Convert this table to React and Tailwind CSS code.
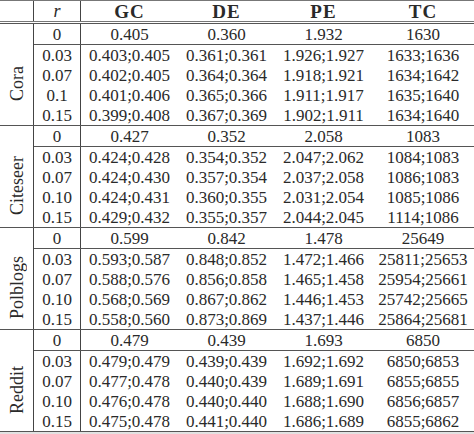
import React from "react";

const blocks = [
  {
    name: "Cora",
    base: ["0", "0.405", "0.360", "1.932", "1630"],
    rows: [
      ["0.03", "0.403;0.405", "0.361;0.361", "1.926;1.927", "1633;1636"],
      ["0.07", "0.402;0.405", "0.364;0.364", "1.918;1.921", "1634;1642"],
      ["0.1", "0.401;0.406", "0.365;0.366", "1.911;1.917", "1635;1640"],
      ["0.15", "0.399;0.408", "0.367;0.369", "1.902;1.911", "1634;1640"],
    ],
  },
  {
    name: "Citeseer",
    base: ["0", "0.427", "0.352", "2.058", "1083"],
    rows: [
      ["0.03", "0.424;0.428", "0.354;0.352", "2.047;2.062", "1084;1083"],
      ["0.07", "0.424;0.430", "0.357;0.354", "2.037;2.058", "1086;1083"],
      ["0.10", "0.424;0.431", "0.360;0.355", "2.031;2.054", "1085;1086"],
      ["0.15", "0.429;0.432", "0.355;0.357", "2.044;2.045", "1114;1086"],
    ],
  },
  {
    name: "Polblogs",
    base: ["0", "0.599", "0.842", "1.478", "25649"],
    rows: [
      ["0.03", "0.593;0.587", "0.848;0.852", "1.472;1.466", "25811;25653"],
      ["0.07", "0.588;0.576", "0.856;0.858", "1.465;1.458", "25954;25661"],
      ["0.10", "0.568;0.569", "0.867;0.862", "1.446;1.453", "25742;25665"],
      ["0.15", "0.558;0.560", "0.873;0.869", "1.437;1.446", "25864;25681"],
    ],
  },
  {
    name: "Reddit",
    base: ["0", "0.479", "0.439", "1.693", "6850"],
    rows: [
      ["0.03", "0.479;0.479", "0.439;0.439", "1.692;1.692", "6850;6853"],
      ["0.07", "0.477;0.478", "0.440;0.439", "1.689;1.691", "6855;6855"],
      ["0.10", "0.476;0.478", "0.440;0.440", "1.688;1.690", "6856;6857"],
      ["0.15", "0.475;0.478", "0.441;0.440", "1.686;1.689", "6855;6862"],
    ],
  },
];

function Row({ cells, first }) {
  return (
    <div
      className={
        "grid grid-cols-[47px_97px_97px_97px_1fr] " +
        (first ? "h-[21px] border-b border-[#555]" : "h-[20px]")
      }
    >
      {cells.map((c, i) => (
        <div
          key={i}
          className={
            "flex items-center justify-center leading-none " +
            (i === 0 ? "border-r border-[#444]" : "")
          }
        >
          {c}
        </div>
      ))}
    </div>
  );
}

export default function App() {
  return (
    <div className="w-[474px] h-[434px] bg-white text-[#2a2a2a] text-[17px] overflow-hidden font-['Liberation_Serif','Times_New_Roman',serif]">
      <div className="h-[22px] flex border-t border-b border-[#777]">
        <div className="w-[34px] shrink-0 border-r border-[#444]" />
        <div className="flex-1 grid grid-cols-[47px_97px_97px_97px_1fr] text-[19px] font-bold leading-none">
          <div className="flex items-center justify-center border-r border-[#444] italic font-normal text-[18px]">
            r
          </div>
          <div className="flex items-center justify-center tracking-[1px]">GC</div>
          <div className="flex items-center justify-center tracking-[1px]">DE</div>
          <div className="flex items-center justify-center tracking-[1px]">PE</div>
          <div className="flex items-center justify-center tracking-[1px]">TC</div>
        </div>
      </div>
      <div className="h-[2px] border-b border-[#555]" />
      {blocks.map((b) => (
        <div key={b.name} className="flex border-b border-[#555]">
          <div className="w-[34px] shrink-0 border-r border-[#444] flex flex-col">
            <div className="h-[18px]" />
            <div className="flex-1 flex items-center justify-center">
              <span className="[writing-mode:vertical-rl] rotate-180 text-[18px] leading-none">
                {b.name}
              </span>
            </div>
          </div>
          <div className="flex-1 flex flex-col">
            <Row cells={b.base} first />
            {b.rows.map((r, i) => (
              <Row key={i} cells={r} />
            ))}
          </div>
        </div>
      ))}
      <div className="h-[2px] bg-[#e2e2e2]" />
    </div>
  );
}
